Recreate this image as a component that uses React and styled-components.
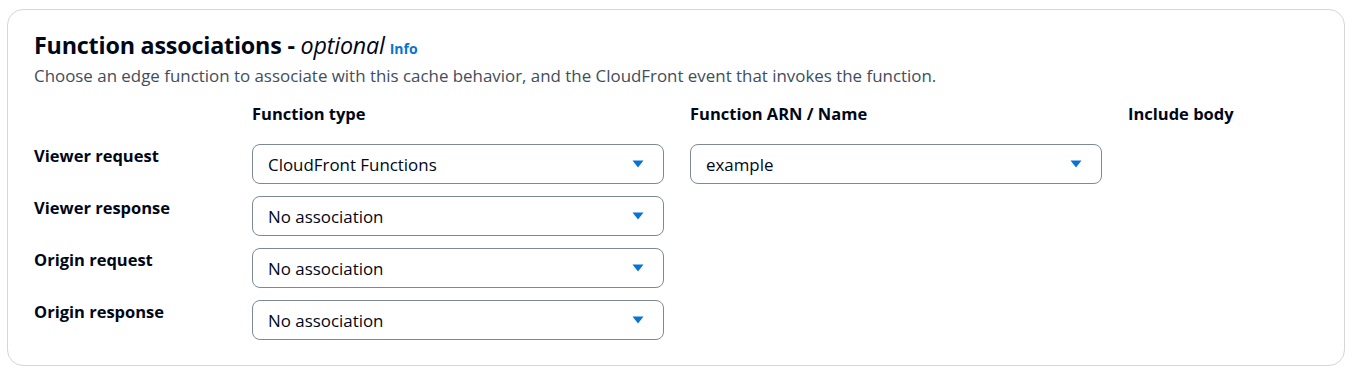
import styled, { createGlobalStyle } from 'styled-components';

const GlobalStyle = createGlobalStyle`
  html, body {
    margin: 0;
    padding: 0;
    background: #ffffff;
  }
  body {
    font-family: "Open Sans", "Noto Sans", sans-serif;
    color: #000716;
  }
  * {
    box-sizing: border-box;
  }
`;

const rows = [
  { label: 'Viewer request', type: 'CloudFront Functions', arn: 'example' },
  { label: 'Viewer response', type: 'No association' },
  { label: 'Origin request', type: 'No association' },
  { label: 'Origin response', type: 'No association' },
];

function Caret() {
  return (
    <CaretIcon viewBox="0 0 12 8" aria-hidden="true">
      <path d="M0.5 0.5 L11.5 0.5 L6 7.5 Z" fill="#0972d3" />
    </CaretIcon>
  );
}

function Select({ value }) {
  return (
    <SelectBox>
      <SelectValue>{value}</SelectValue>
      <Caret />
    </SelectBox>
  );
}

export default function App() {
  return (
    <>
      <GlobalStyle />
      <Page>
        <Card>
          <Header>
            <Title>
              Function associations - <Optional>optional</Optional>
              <InfoLink>Info</InfoLink>
            </Title>
            <Description>
              Choose an edge function to associate with this cache behavior, and
              the CloudFront event that invokes the function.
            </Description>
          </Header>
          <Grid>
            <span />
            <ColumnHead>Function type</ColumnHead>
            <ColumnHead>Function ARN / Name</ColumnHead>
            <ColumnHead>Include body</ColumnHead>
            {rows.map((row) => (
              <Row key={row.label}>
                <RowLabel>{row.label}</RowLabel>
                <Select value={row.type} />
                {row.arn ? <Select value={row.arn} /> : <span />}
                <span />
              </Row>
            ))}
          </Grid>
        </Card>
      </Page>
    </>
  );
}

const Page = styled.div`
  padding: 9px 13px 10px 7px;
`;

const Card = styled.section`
  border: 1px solid #d3d6da;
  border-radius: 16px;
  padding: 20px 26px 25px 26px;
  background: #ffffff;
`;

const Header = styled.header`
  display: flex;
  flex-direction: column;
  gap: 1px;
`;

const Title = styled.h2`
  margin: 0;
  font-size: 23.3px;
  line-height: 30px;
  font-weight: 700;
  color: #000716;
  letter-spacing: -0.2px;
`;

const Optional = styled.i`
  font-weight: 400;
  font-style: italic;
`;

const InfoLink = styled.a`
  margin-left: 5px;
  font-size: 14px;
  font-weight: 700;
  color: #0972d3;
  letter-spacing: 0;
  cursor: pointer;
`;

const Description = styled.p`
  margin: 0;
  font-size: 16.9px;
  line-height: 22px;
  color: #414d5c;
`;

const Grid = styled.div`
  margin-top: 17px;
  display: grid;
  grid-template-columns: 192px 412px 412px 1fr;
  column-gap: 26px;
  row-gap: 12px;
`;

const Row = styled.div`
  display: contents;
`;

const ColumnHead = styled.div`
  font-size: 16.5px;
  line-height: 20px;
  font-weight: 700;
  color: #000716;
  margin-bottom: 8px;
`;

const RowLabel = styled.div`
  font-size: 16.5px;
  line-height: 20px;
  font-weight: 700;
  color: #000716;
  padding-top: 2px;
`;

const SelectBox = styled.div`
  height: 40px;
  border: 1px solid #7d8998;
  border-radius: 8px;
  display: flex;
  align-items: center;
  justify-content: space-between;
  padding: 0 19px 0 15px;
  background: #ffffff;
`;

const SelectValue = styled.span`
  font-size: 16.9px;
  color: #000716;
`;

const CaretIcon = styled.svg`
  width: 12px;
  height: 8px;
  flex: none;
`;
